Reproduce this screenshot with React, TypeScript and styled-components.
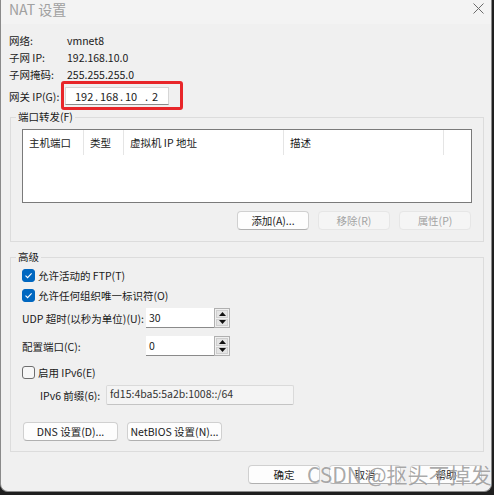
import React from 'react';
import styled, { createGlobalStyle } from 'styled-components';

const GlobalStyle = createGlobalStyle`
  html, body {
    margin: 0;
    padding: 0;
    background: #1f1f1f;
  }
  body {
    font-family: "Noto Sans CJK SC", "Noto Sans", sans-serif;
    font-size: 10.5px;
    color: #1a1a1a;
  }
`;

const Window = styled.div`
  position: relative;
  box-sizing: border-box;
  width: 492px;
  height: 492px;
  background: #f0f0f0;
  border: 1px solid #8a8a8a;
  border-top: none;
  border-radius: 0 0 8px 8px;
  display: flex;
  flex-direction: column;
  overflow: hidden;
`;

const TitleBar = styled.div`
  height: 24px;
  flex-shrink: 0;
  background: #f3f3f3;
  display: flex;
  justify-content: space-between;
  align-items: flex-start;
  padding: 0 7px 0 8px;
`;

const Title = styled.span`
  font-size: 14px;
  line-height: 18px;
  color: #a0a0a0;
`;

const CloseButton = styled.span`
  display: flex;
  margin-top: 3px;
`;

const Content = styled.div`
  padding: 8px 7px 9px 8px;
  display: flex;
  flex-direction: column;
`;

const InfoGrid = styled.div`
  display: grid;
  grid-template-columns: 58px auto;
  grid-auto-rows: 17px;
  align-items: center;
`;

const GatewayRow = styled.div`
  display: flex;
  align-items: center;
  height: 18px;
  margin-top: 4px;
`;

const GatewayLabel = styled.span`
  width: 56px;
  white-space: nowrap;
`;

const IpBox = styled.div`
  position: relative;
  box-sizing: border-box;
  width: 104px;
  height: 18px;
  background: #fff;
  border: 1px solid #d6d6d6;
  border-bottom-color: #8a8a8a;
  padding-left: 9px;
  display: flex;
  align-items: center;
  font-size: 11px;
`;

const IpPart = styled.span<{ $last: boolean }>`
  display: flex;
  flex-shrink: 0;
  width: ${p => (p.$last ? 'auto' : '25px')};
  padding-left: ${p => (p.$last ? '2px' : '0')};
`;

const IpNumber = styled.span`
  width: 18px;
`;

const IpDot = styled.span`
  width: 7px;
  text-align: center;
`;

const Highlight = styled.div`
  position: absolute;
  box-sizing: border-box;
  top: -7px;
  left: -5px;
  width: 122px;
  height: 29px;
  border: 3px solid #e8262a;
  border-radius: 3px;
`;

const Group = styled.fieldset<{ $top: number; $pad: string }>`
  margin: ${p => p.$top}px 0 0 1px;
  padding: ${p => p.$pad};
  border: 1px solid #dcdcdc;
  min-width: 0;
`;

const Legend = styled.legend`
  padding: 0 2px;
  margin-left: -6px;
  line-height: 16px;
`;

const ListView = styled.div`
  box-sizing: border-box;
  height: 74px;
  background: #fff;
  border: 1px solid #7a7a7a;
`;

const HeaderRow = styled.div`
  display: flex;
  height: 25px;
`;

const HeaderCell = styled.div<{ $w: number }>`
  box-sizing: border-box;
  width: ${p => p.$w}px;
  padding-left: 6px;
  border-right: 1px solid #e5e5e5;
  display: flex;
  align-items: center;
`;

const ButtonRow = styled.div<{ $top: number; $align: string }>`
  display: flex;
  justify-content: ${p => p.$align};
  gap: 9px;
  margin-top: ${p => p.$top}px;
  padding: 0 1px;
`;

const Button = styled.div<{ $w: number; $disabled?: boolean }>`
  box-sizing: border-box;
  width: ${p => p.$w}px;
  height: 19px;
  display: flex;
  align-items: center;
  justify-content: center;
  white-space: nowrap;
  border-radius: 4px;
  background: ${p => (p.$disabled ? '#f5f5f5' : '#fdfdfd')};
  border: 1px solid ${p => (p.$disabled ? '#e6e6e6' : '#d0d0d0')};
  border-bottom-color: ${p => (p.$disabled ? '#e6e6e6' : '#b0b0b0')};
  color: ${p => (p.$disabled ? '#a3a3a3' : '#1a1a1a')};
`;

const CheckRow = styled.div<{ $top?: number }>`
  display: flex;
  align-items: center;
  gap: 3px;
  height: 20px;
  margin-top: ${p => p.$top ?? 0}px;
`;

const Box = styled.span<{ $checked: boolean }>`
  box-sizing: border-box;
  width: 13px;
  height: 13px;
  border-radius: 3px;
  display: flex;
  align-items: center;
  justify-content: center;
  background: ${p => (p.$checked ? '#0067c0' : '#f7f7f7')};
  border: 1px solid ${p => (p.$checked ? '#0067c0' : '#6e6e6e')};
`;

const SpinRow = styled.div<{ $top: number }>`
  display: flex;
  align-items: center;
  height: 20px;
  margin-top: ${p => p.$top}px;
`;

const SpinLabel = styled.span`
  width: 124px;
  flex-shrink: 0;
  white-space: nowrap;
`;

const SpinInput = styled.div`
  box-sizing: border-box;
  width: 68px;
  height: 20px;
  background: #fff;
  border-bottom: 1px solid #8a8a8a;
  padding-left: 3px;
  display: flex;
  align-items: center;
`;

const Spinner = styled.div`
  box-sizing: border-box;
  width: 16px;
  height: 20px;
  border: 1px solid #b0b0b0;
  padding: 1px;
  display: flex;
  flex-direction: column;
  gap: 1px;
  background: #f0f0f0;
`;

const SpinButton = styled.span`
  flex: 1;
  display: flex;
  align-items: center;
  justify-content: center;
  background: #e4e4e4;
  border: 1px solid #cfcfcf;
`;

const PrefixRow = styled.div`
  display: flex;
  align-items: center;
  height: 20px;
  margin-top: 3px;
  padding-left: 18px;
`;

const PrefixLabel = styled.span`
  width: 66px;
  white-space: nowrap;
`;

const PrefixField = styled.div`
  box-sizing: border-box;
  width: 188px;
  height: 20px;
  background: #f4f4f4;
  border: 1px solid #dadada;
  border-bottom-color: #c4c4c4;
  border-radius: 2px;
  padding: 0 0 3px 3px;
  display: flex;
  align-items: center;
  color: #333;
`;

const Footer = styled.div`
  display: flex;
  justify-content: flex-end;
  gap: 9px;
  margin: 13px 2px 0 0;
`;

const Watermark = styled.div`
  position: absolute;
  left: 306px;
  top: 462px;
  font-size: 21px;
  line-height: 24px;
  white-space: nowrap;
  color: rgba(95, 95, 95, 0.55);
  text-shadow: 0 0 1px rgba(255, 255, 255, 0.8);
  pointer-events: none;
`;

const Check = () => (
  <svg width="9" height="9" viewBox="0 0 9 9">
    <path d="M1.5 4.6 L3.6 6.7 L7.6 2.3" fill="none" stroke="#fff" strokeWidth="1.1" />
  </svg>
);

const Arrow = ({ up }: { up?: boolean }) => (
  <svg width="7" height="4" viewBox="0 0 7 4">
    <polygon points={up ? '3.5,0 7,4 0,4' : '0,0 7,0 3.5,4'} fill="#111" />
  </svg>
);

function CheckBox({ checked, label, top }: { checked: boolean; label: string; top?: number }) {
  return (
    <CheckRow $top={top}>
      <Box $checked={checked}>{checked && <Check />}</Box>
      <span>{label}</span>
    </CheckRow>
  );
}

function SpinField({ label, value, top }: { label: string; value: string; top: number }) {
  return (
    <SpinRow $top={top}>
      <SpinLabel>{label}</SpinLabel>
      <SpinInput>{value}</SpinInput>
      <Spinner>
        <SpinButton><Arrow up /></SpinButton>
        <SpinButton><Arrow /></SpinButton>
      </Spinner>
    </SpinRow>
  );
}

const columns = [
  { title: '主机端口', w: 61 },
  { title: '类型', w: 40 },
  { title: '虚拟机 IP 地址', w: 160 },
  { title: '描述', w: 160 },
];

const gateway = ['192', '168', '10', '2'];

export default function App() {
  return (
    <>
      <GlobalStyle />
      <Window>
        <TitleBar>
          <Title>NAT 设置</Title>
          <CloseButton>
            <svg width="11" height="11" viewBox="0 0 11 11">
              <path d="M0.5 0.5 L10.5 10.5 M10.5 0.5 L0.5 10.5" stroke="#6b6b6b" strokeWidth="1" />
            </svg>
          </CloseButton>
        </TitleBar>

        <Content>
          <InfoGrid>
            <span>网络:</span>
            <span>vmnet8</span>
            <span>子网 IP:</span>
            <span>192.168.10.0</span>
            <span>子网掩码:</span>
            <span>255.255.255.0</span>
          </InfoGrid>

          <GatewayRow>
            <GatewayLabel>网关 IP(G):</GatewayLabel>
            <IpBox>
              {gateway.map((n, i) => {
                const last = i === gateway.length - 1;
                return (
                  <IpPart key={i} $last={last}>
                    {last ? n : <IpNumber>{n}</IpNumber>}
                    {!last && <IpDot>.</IpDot>}
                  </IpPart>
                );
              })}
              <Highlight />
            </IpBox>
          </GatewayRow>

          <Group $top={4} $pad="4px 11px 11px 11px">
            <Legend>端口转发(F)</Legend>
            <ListView>
              <HeaderRow>
                {columns.map(c => (
                  <HeaderCell key={c.title} $w={c.w}>{c.title}</HeaderCell>
                ))}
              </HeaderRow>
            </ListView>
            <ButtonRow $top={8} $align="flex-end">
              <Button $w={72}>添加(A)...</Button>
              <Button $w={72} $disabled>移除(R)</Button>
              <Button $w={72} $disabled>属性(P)</Button>
            </ButtonRow>
          </Group>

          <Group $top={7} $pad="0 11px 10px 11px">
            <Legend>高级</Legend>
            <CheckBox checked label="允许活动的 FTP(T)" />
            <CheckBox checked label="允许任何组织唯一标识符(O)" />
            <SpinField label="UDP 超时(以秒为单位)(U):" value="30" top={3} />
            <SpinField label="配置端口(C):" value="0" top={8} />
            <CheckBox checked={false} label="启用 IPv6(E)" top={6} />
            <PrefixRow>
              <PrefixLabel>IPv6 前缀(6):</PrefixLabel>
              <PrefixField>fd15:4ba5:5a2b:1008::/64</PrefixField>
            </PrefixRow>
            <ButtonRow $top={17} $align="flex-start">
              <Button $w={95}>DNS 设置(D)...</Button>
              <Button $w={95}>NetBIOS 设置(N)...</Button>
            </ButtonRow>
          </Group>

          <Footer>
            <Button $w={72}>确定</Button>
            <Button $w={72}>取消</Button>
            <Button $w={72}>帮助</Button>
          </Footer>
        </Content>

        <Watermark>CSDN @抠头不掉发</Watermark>
      </Window>
    </>
  );
}
